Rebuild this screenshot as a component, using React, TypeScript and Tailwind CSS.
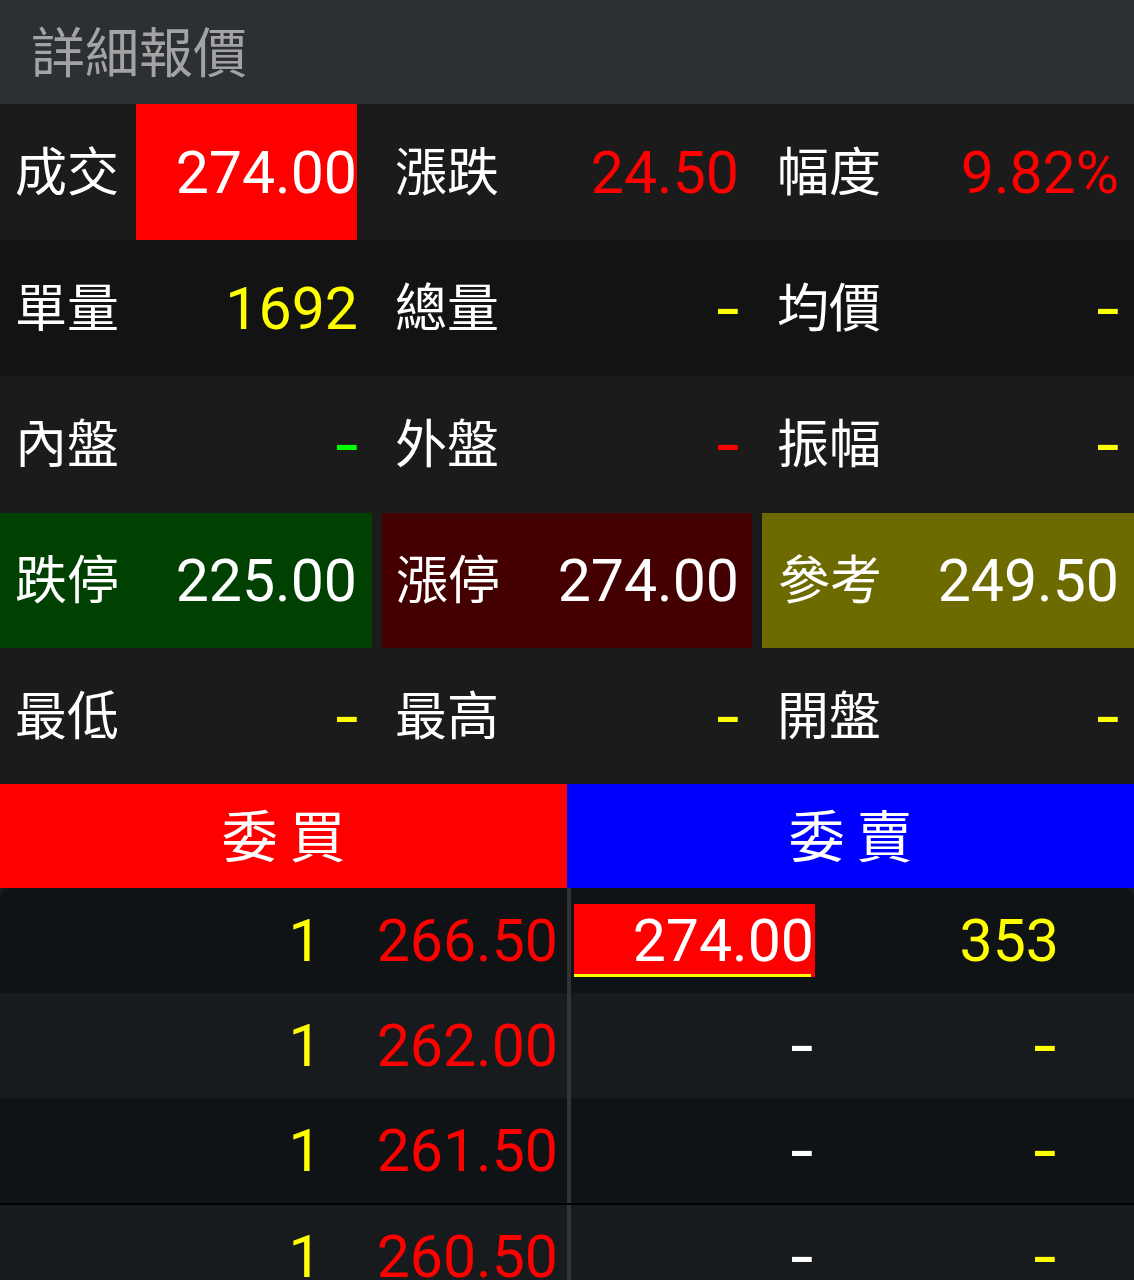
import React from "react";

const CJK = { fontFamily: '"Noto Sans CJK TC", "Noto Sans", sans-serif' };
const NUM = { fontFamily: 'Roboto, "Liberation Sans", sans-serif' };

type Cell = { label: string; value: string; color: string; box?: boolean };

function Val({ v, color }: { v: string; color: string }) {
  if (v === "-") {
    return (
      <span
        className="text-[59px] leading-none inline-block scale-x-[1.4] scale-y-[1.15] origin-right"
        style={{ ...NUM, color }}
      >
        -
      </span>
    );
  }
  return (
    <span className="text-[59px] leading-none" style={{ ...NUM, color }}>
      {v}
    </span>
  );
}

const PADS = [
  { pl: "pl-[15px]", pr: "pr-[20px]" },
  { pl: "pl-[17px]", pr: "pr-[17px]" },
  { pl: "pl-[21px]", pr: "pr-[15px]" },
];

function InfoCell({ c, i }: { c: Cell; i: number }) {
  const p = PADS[i];
  return (
    <div className={`flex items-center justify-between h-full ${p.pl} ${c.box ? "pr-[21px]" : p.pr}`}>
      <span className="text-[52px] text-white leading-none mb-[7px]" style={CJK}>
        {c.label}
      </span>
      {c.box ? (
        <span
          className="h-full w-[221px] bg-[#ff0000] flex items-center justify-end text-[59px] leading-none"
          style={{ ...NUM, color: c.color }}
        >
          {c.value}
        </span>
      ) : (
        <Val v={c.value} color={c.color} />
      )}
    </div>
  );
}

function InfoRow({ cells, bg }: { cells: Cell[]; bg: string }) {
  return (
    <div className={`grid grid-cols-3 h-[136px] ${bg}`}>
      {cells.map((c, i) => (
        <InfoCell key={i} c={c} i={i} />
      ))}
    </div>
  );
}

const Y = "#ffff00";
const R = "#ff0000";
const G = "#00ff00";
const W = "#ffffff";

type BookRow = { bq: string; bp: string; ap: string; aq: string; hl?: boolean };

const book: BookRow[] = [
  { bq: "1", bp: "266.50", ap: "274.00", aq: "353", hl: true },
  { bq: "1", bp: "262.00", ap: "-", aq: "-" },
  { bq: "1", bp: "261.50", ap: "-", aq: "-" },
  { bq: "1", bp: "260.50", ap: "-", aq: "-" },
];

export default function App() {
  return (
    <div className="w-[1134px] h-[1280px] overflow-hidden bg-[#1b1b1b]">
      {/* Header */}
      <div className="h-[104px] bg-[#2c3035] flex items-center pl-[31px]">
        <span className="text-[54px] text-[#a3a3a3] leading-none mb-[4px]" style={CJK}>
          詳細報價
        </span>
      </div>

      <InfoRow
        bg="bg-[#1b1b1b]"
        cells={[
          { label: "成交", value: "274.00", color: W, box: true },
          { label: "漲跌", value: "24.50", color: R },
          { label: "幅度", value: "9.82%", color: R },
        ]}
      />
      <InfoRow
        bg="bg-[#131313]"
        cells={[
          { label: "單量", value: "1692", color: Y },
          { label: "總量", value: "-", color: Y },
          { label: "均價", value: "-", color: Y },
        ]}
      />
      <InfoRow
        bg="bg-[#1b1b1b]"
        cells={[
          { label: "內盤", value: "-", color: G },
          { label: "外盤", value: "-", color: R },
          { label: "振幅", value: "-", color: Y },
        ]}
      />

      {/* Limits row */}
      <div className="flex gap-[10px] h-[136px] pt-[1px] bg-[#1b1b1b]">
        {[
          { label: "跌停", value: "225.00", bg: "bg-[#004000]", w: "w-[372px]", p: "pl-[15px] pr-[15px]" },
          { label: "漲停", value: "274.00", bg: "bg-[#440000]", w: "w-[370px]", p: "pl-[14px] pr-[13px]" },
          { label: "參考", value: "249.50", bg: "bg-[#6d6a00]", w: "flex-1", p: "pl-[16px] pr-[15px]" },
        ].map((c, i) => (
          <div
            key={i}
            className={`${c.bg} ${c.w} ${c.p} flex items-center justify-between h-full`}
          >
            <span className="text-[52px] text-white leading-none mb-[7px]" style={CJK}>
              {c.label}
            </span>
            <span className="text-[59px] text-white leading-none" style={NUM}>
              {c.value}
            </span>
          </div>
        ))}
      </div>

      <InfoRow
        bg="bg-[#1b1b1b]"
        cells={[
          { label: "最低", value: "-", color: Y },
          { label: "最高", value: "-", color: Y },
          { label: "開盤", value: "-", color: Y },
        ]}
      />

      {/* Bid / Ask header */}
      <div className="flex h-[104px]">
        <div className="w-[567px] bg-[#ff0000] flex items-center justify-center">
          <span className="text-[56px] text-white leading-none tracking-[12px] pl-[12px] mb-[6px]" style={CJK}>
            委買
          </span>
        </div>
        <div className="flex-1 bg-[#0000ff] flex items-center justify-center">
          <span className="text-[56px] text-white leading-none tracking-[12px] pl-[12px] mb-[6px]" style={CJK}>
            委賣
          </span>
        </div>
      </div>

      {/* Order book */}
      <div className="flex flex-col">
        {book.map((r, i) => (
          <div
            key={i}
            className={`flex h-[105px] ${i % 2 === 0 ? "bg-[#101315]" : "bg-[#181b1e]"} ${
              i === 3 ? "border-t-2 border-black" : ""
            } ${i === 0 ? "rounded-tl-[10px] rounded-tr-[10px]" : ""}`}
          >
            <div className="w-[567px] flex items-center justify-end pr-[9px]">
              <span className="text-[59px] leading-none mr-[55px]" style={{ ...NUM, color: Y }}>
                {r.bq}
              </span>
              <span className="text-[59px] leading-none" style={{ ...NUM, color: R }}>
                {r.bp}
              </span>
            </div>
            <div className="w-[4px] bg-[#343434]" />
            <div className="flex-1 flex items-center pl-[3px]">
              {r.hl ? (
                <div className="w-[241px] h-[73px] bg-[#ff0000] relative flex items-center justify-end pr-[1px]">
                  <span className="text-[59px] leading-none text-white" style={NUM}>
                    {r.ap}
                  </span>
                  <div className="absolute left-0 bottom-0 w-[237px] h-[3px] bg-[#ffff00]" />
                </div>
              ) : (
                <div className="w-[241px] h-[73px] flex items-center justify-end pr-[2px]">
                  <Val v={r.ap} color={W} />
                </div>
              )}
              <div className={`w-[244px] flex items-center justify-end ${r.aq === "-" ? "pr-[3px]" : ""}`}>
                <Val v={r.aq} color={Y} />
              </div>
            </div>
          </div>
        ))}
      </div>
    </div>
  );
}
